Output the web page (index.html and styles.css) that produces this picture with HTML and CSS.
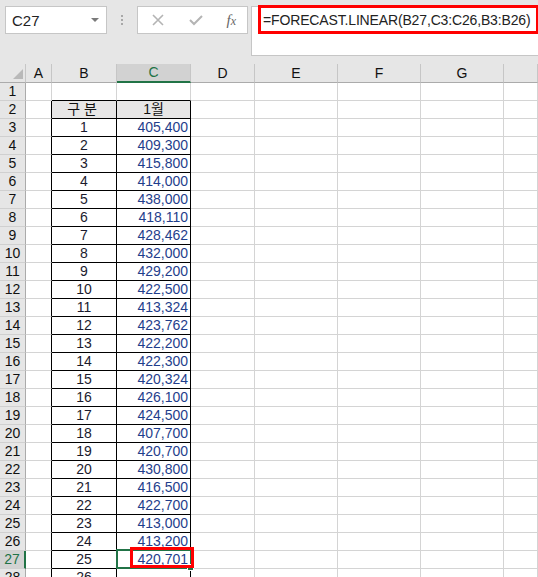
FILE: index.html
```html
<!DOCTYPE html>
<html lang="ko">
<head>
<meta charset="utf-8">
<link rel="stylesheet" href="styles.css">
</head>
<body>
<div class="top">
  <div class="namebox"><span class="ref">C27</span><span class="caret"></span></div>
  <div class="dots"><i></i><i></i><i></i></div>
  <div class="fxbox">
    <svg class="ico" width="14" height="14" viewBox="0 0 14 14"><path d="M2 2 L12 12 M12 2 L2 12" stroke="#b4b4b4" stroke-width="1.6" fill="none"/></svg>
    <svg class="ico" width="16" height="14" viewBox="0 0 16 14"><path d="M2 7 L6 11 L14 3" stroke="#b4b4b4" stroke-width="2" fill="none"/></svg>
    <span class="fx">f<span class="fxx">x</span></span>
  </div>
  <div class="formula">
    <span class="ftext">=FORECAST.LINEAR(B27,C3:C26,B3:B26)</span>
    <div class="redbox"></div>
  </div>
</div>
<div class="sheet">
  <div class="row hdr"><div class="corner"><span class="tri"></span></div><div>A</div><div>B</div><div class="sel">C</div><div>D</div><div>E</div><div>F</div><div>G</div><div></div></div>
  <div class="row"><div class="rh">1</div><div></div><div class="tt"></div><div class="tt"></div><div></div><div></div><div></div><div></div><div></div></div>
  <div class="row"><div class="rh">2</div><div class="tl"></div><div class="t th">구 분&nbsp;</div><div class="t th">1월</div><div></div><div></div><div></div><div></div><div></div></div>
  <div class="row"><div class="rh">3</div><div class="tl"></div><div class="t b">1</div><div class="t n">405,400</div><div></div><div></div><div></div><div></div><div></div></div>
  <div class="row"><div class="rh">4</div><div class="tl"></div><div class="t b">2</div><div class="t n">409,300</div><div></div><div></div><div></div><div></div><div></div></div>
  <div class="row"><div class="rh">5</div><div class="tl"></div><div class="t b">3</div><div class="t n">415,800</div><div></div><div></div><div></div><div></div><div></div></div>
  <div class="row"><div class="rh">6</div><div class="tl"></div><div class="t b">4</div><div class="t n">414,000</div><div></div><div></div><div></div><div></div><div></div></div>
  <div class="row"><div class="rh">7</div><div class="tl"></div><div class="t b">5</div><div class="t n">438,000</div><div></div><div></div><div></div><div></div><div></div></div>
  <div class="row"><div class="rh">8</div><div class="tl"></div><div class="t b">6</div><div class="t n">418,110</div><div></div><div></div><div></div><div></div><div></div></div>
  <div class="row"><div class="rh">9</div><div class="tl"></div><div class="t b">7</div><div class="t n">428,462</div><div></div><div></div><div></div><div></div><div></div></div>
  <div class="row"><div class="rh">10</div><div class="tl"></div><div class="t b">8</div><div class="t n">432,000</div><div></div><div></div><div></div><div></div><div></div></div>
  <div class="row"><div class="rh">11</div><div class="tl"></div><div class="t b">9</div><div class="t n">429,200</div><div></div><div></div><div></div><div></div><div></div></div>
  <div class="row"><div class="rh">12</div><div class="tl"></div><div class="t b">10</div><div class="t n">422,500</div><div></div><div></div><div></div><div></div><div></div></div>
  <div class="row"><div class="rh">13</div><div class="tl"></div><div class="t b">11</div><div class="t n">413,324</div><div></div><div></div><div></div><div></div><div></div></div>
  <div class="row"><div class="rh">14</div><div class="tl"></div><div class="t b">12</div><div class="t n">423,762</div><div></div><div></div><div></div><div></div><div></div></div>
  <div class="row"><div class="rh">15</div><div class="tl"></div><div class="t b">13</div><div class="t n">422,200</div><div></div><div></div><div></div><div></div><div></div></div>
  <div class="row"><div class="rh">16</div><div class="tl"></div><div class="t b">14</div><div class="t n">422,300</div><div></div><div></div><div></div><div></div><div></div></div>
  <div class="row"><div class="rh">17</div><div class="tl"></div><div class="t b">15</div><div class="t n">420,324</div><div></div><div></div><div></div><div></div><div></div></div>
  <div class="row"><div class="rh">18</div><div class="tl"></div><div class="t b">16</div><div class="t n">426,100</div><div></div><div></div><div></div><div></div><div></div></div>
  <div class="row"><div class="rh">19</div><div class="tl"></div><div class="t b">17</div><div class="t n">424,500</div><div></div><div></div><div></div><div></div><div></div></div>
  <div class="row"><div class="rh">20</div><div class="tl"></div><div class="t b">18</div><div class="t n">407,700</div><div></div><div></div><div></div><div></div><div></div></div>
  <div class="row"><div class="rh">21</div><div class="tl"></div><div class="t b">19</div><div class="t n">420,700</div><div></div><div></div><div></div><div></div><div></div></div>
  <div class="row"><div class="rh">22</div><div class="tl"></div><div class="t b">20</div><div class="t n">430,800</div><div></div><div></div><div></div><div></div><div></div></div>
  <div class="row"><div class="rh">23</div><div class="tl"></div><div class="t b">21</div><div class="t n">416,500</div><div></div><div></div><div></div><div></div><div></div></div>
  <div class="row"><div class="rh">24</div><div class="tl"></div><div class="t b">22</div><div class="t n">422,700</div><div></div><div></div><div></div><div></div><div></div></div>
  <div class="row"><div class="rh">25</div><div class="tl"></div><div class="t b">23</div><div class="t n">413,000</div><div></div><div></div><div></div><div></div><div></div></div>
  <div class="row"><div class="rh">26</div><div class="tl"></div><div class="t b">24</div><div class="t n">413,200</div><div></div><div></div><div></div><div></div><div></div></div>
  <div class="row"><div class="rh selr">27</div><div class="tl"></div><div class="t b">25</div><div class="t n active">420,701<span class="cursor"><span class="handle"></span></span><span class="redcell"></span></div><div></div><div></div><div></div><div></div><div></div></div>
  <div class="row"><div class="rh">28</div><div class="tl"></div><div class="t b">26</div><div class="t n"></div><div></div><div></div><div></div><div></div><div></div></div>
</div>
</body>
</html>
```

FILE: styles.css
```css
html, body {
  margin: 0;
  padding: 0;
  background: #e6e6e6;
  overflow: hidden;
}
body {
  width: 538px;
  height: 577px;
  font-family: "Liberation Sans", "Noto Sans CJK KR", sans-serif;
  color: #111;
}
.top {
  height: 64px;
  display: flex;
  align-items: flex-start;
  padding: 6px 0 0 5px;
  box-sizing: border-box;
}
.namebox {
  flex: none;
  width: 102px;
  height: 28px;
  box-sizing: border-box;
  border: 1px solid #c6c6c6;
  background: #fff;
  display: flex;
  align-items: center;
  justify-content: space-between;
  padding: 0 7px 0 6px;
}
.ref {
  font-size: 15px;
  color: #222;
}
.caret {
  width: 0;
  height: 0;
  border-left: 4px solid transparent;
  border-right: 4px solid transparent;
  border-top: 4px solid #7a7a7a;
}
.dots {
  flex: none;
  width: 2px;
  margin: 9px 14px 0 14px;
  display: flex;
  flex-direction: column;
  gap: 2px;
}
.dots i {
  width: 2px;
  height: 2px;
  background: #a8a8a8;
}
.fxbox {
  flex: none;
  width: 111px;
  height: 28px;
  box-sizing: border-box;
  border: 1px solid #c6c6c6;
  background: #fff;
  display: flex;
  align-items: center;
  padding: 0 11px 0 13px;
  justify-content: space-between;
}
.fx {
  font-family: "Liberation Serif", serif;
  font-style: italic;
  font-size: 15px;
  color: #666;
}
.fxx {
  font-size: 12px;
}
.formula {
  position: relative;
  margin-left: 3px;
  flex: 1;
  min-width: 0;
  height: 50px;
  box-sizing: border-box;
  border: 1px solid #c6c6c6;
  border-right: none;
  background: #fff;
  padding: 3px 0 0 11px;
}
.ftext {
  font-size: 14px;
  letter-spacing: -0.15px;
  line-height: 20px;
  color: #222;
  white-space: nowrap;
}
.redbox {
  position: absolute;
  left: 6px;
  top: -2px;
  width: 281px;
  height: 29px;
  box-sizing: border-box;
  border: 3px solid #f00;
}
.sheet {
  background: #fff;
}
.row {
  display: grid;
  grid-template-columns: 26px 26px 65px 74px 64px 83px 83px 83px 1fr;
  height: 18px;
  font-size: 14px;
  line-height: 17px;
}
.row > div {
  box-sizing: border-box;
  border-right: 1px solid #d4d4d4;
  border-bottom: 1px solid #d4d4d4;
  white-space: nowrap;
}
.hdr {
  height: 19px;
  background: #e6e6e6;
}
.hdr > div {
  text-align: center;
  border-right-color: #c6c6c6;
  border-bottom-color: #ababab;
  line-height: 18px;
}
.hdr > .sel {
  background: #d2d2d2;
  color: #217346;
  border-bottom: 2px solid #217346;
  line-height: 17px;
}
.corner {
  position: relative;
}
.tri {
  position: absolute;
  right: 2px;
  bottom: 3px;
  width: 0;
  height: 0;
  border-left: 10px solid transparent;
  border-bottom: 10px solid #b9b9b9;
}
.row > .rh {
  background: #e6e6e6;
  text-align: center;
  border-right-color: #ababab;
  border-bottom-color: #d0d0d0;
}
.row > .selr {
  background: #d2d2d2;
  color: #217346;
  border-right: 2px solid #217346;
}
.row > .tl {
  border-right-color: #000;
}
.row > .tt {
  border-bottom-color: #000;
}
.row > .t {
  border-right-color: #000;
  border-bottom-color: #000;
}
.th {
  background: #e7e6e6;
  text-align: center;
  color: #111;
}
.b {
  text-align: center;
  color: #1b1b2e;
}
.n {
  text-align: right;
  padding-right: 2px;
  color: #1f3e8c;
}
.active {
  position: relative;
}
.cursor {
  position: absolute;
  left: -1px;
  top: -2px;
  width: 76px;
  height: 20px;
  box-sizing: border-box;
  border: 2px solid #217346;
}
.handle {
  position: absolute;
  right: -4px;
  bottom: -4px;
  width: 5px;
  height: 5px;
  background: #217346;
  border: 1px solid #fff;
}
.redcell {
  position: absolute;
  left: 13px;
  top: -4px;
  width: 64px;
  height: 21px;
  box-sizing: border-box;
  border: 3px solid #f00;
}
```
